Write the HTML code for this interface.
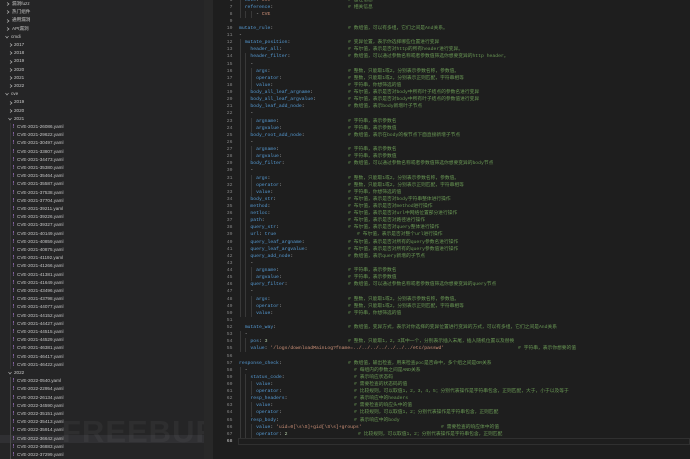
<!DOCTYPE html>
<html><head><meta charset="utf-8">
<style>
*{margin:0;padding:0;box-sizing:border-box}
html,body{width:690px;height:459px;overflow:hidden;background:#1e1e1e}
#side{position:absolute;left:0;top:0;width:213px;height:459px;background:#252526;font-family:"Liberation Sans","Noto Sans CJK SC",sans-serif;font-size:4.6px;color:#c8c8c8;overflow:hidden}
.r{position:absolute;left:0;width:213px;height:8.2px;line-height:8.2px;white-space:nowrap}
.r svg{position:absolute;top:2.2px}
.r .t{position:absolute}
.y{position:absolute;color:#a074c4;font-weight:bold;font-size:5.5px}
.guide{position:absolute;width:1px;background:#363636}
#ed{position:absolute;left:213px;top:0;width:477px;height:459px;background:#1e1e1e;font-family:"Liberation Mono","Noto Sans CJK SC",monospace;font-size:4.75px;overflow:hidden}
.l{position:absolute;left:0;width:477px;height:7.12px;line-height:7.12px;white-space:pre}
.n{position:absolute;left:0;width:19.5px;text-align:right;color:#858585}
.c{position:absolute;left:26px;color:#d4d4d4}
.k{color:#569cd6}
.s{color:#ce9178}
.num{color:#b5cea8}
.g{position:absolute;color:#6a9955}
.ig{position:absolute;width:1px;background:#383838}
#wm{position:absolute;left:62px;top:414px;font-family:"Liberation Sans",sans-serif;font-weight:bold;font-size:31px;color:rgba(255,255,255,0.045);letter-spacing:1px}
</style></head><body>
<div id="side">
<div class="r" style="top:0px"><svg width="4" height="4" viewBox="0 0 4 4" style="left:6px"><path d="M1 0.5L3 2L1 3.5" stroke="#c5c5c5" stroke-width="0.6" fill="none"/></svg><span class="t" style="left:12px">漏洞fuzz</span></div>
<div class="r" style="top:8.2px"><svg width="4" height="4" viewBox="0 0 4 4" style="left:6px"><path d="M1 0.5L3 2L1 3.5" stroke="#c5c5c5" stroke-width="0.6" fill="none"/></svg><span class="t" style="left:12px">热门组件</span></div>
<div class="r" style="top:16.4px"><svg width="4" height="4" viewBox="0 0 4 4" style="left:6px"><path d="M1 0.5L3 2L1 3.5" stroke="#c5c5c5" stroke-width="0.6" fill="none"/></svg><span class="t" style="left:12px">通用漏洞</span></div>
<div class="r" style="top:24.6px"><svg width="4" height="4" viewBox="0 0 4 4" style="left:6px"><path d="M1 0.5L3 2L1 3.5" stroke="#c5c5c5" stroke-width="0.6" fill="none"/></svg><span class="t" style="left:12px">API漏洞</span></div>
<div class="r" style="top:32.8px"><svg width="4" height="4" viewBox="0 0 4 4" style="left:5px"><path d="M0.5 1L2 3L3.5 1" stroke="#c5c5c5" stroke-width="0.6" fill="none"/></svg><span class="t" style="left:11px">cmdi</span></div>
<div class="r" style="top:41px"><svg width="4" height="4" viewBox="0 0 4 4" style="left:9px"><path d="M1 0.5L3 2L1 3.5" stroke="#c5c5c5" stroke-width="0.6" fill="none"/></svg><span class="t" style="left:14px">2017</span></div>
<div class="r" style="top:49.2px"><svg width="4" height="4" viewBox="0 0 4 4" style="left:9px"><path d="M1 0.5L3 2L1 3.5" stroke="#c5c5c5" stroke-width="0.6" fill="none"/></svg><span class="t" style="left:14px">2018</span></div>
<div class="r" style="top:57.4px"><svg width="4" height="4" viewBox="0 0 4 4" style="left:9px"><path d="M1 0.5L3 2L1 3.5" stroke="#c5c5c5" stroke-width="0.6" fill="none"/></svg><span class="t" style="left:14px">2019</span></div>
<div class="r" style="top:65.6px"><svg width="4" height="4" viewBox="0 0 4 4" style="left:9px"><path d="M1 0.5L3 2L1 3.5" stroke="#c5c5c5" stroke-width="0.6" fill="none"/></svg><span class="t" style="left:14px">2020</span></div>
<div class="r" style="top:73.8px"><svg width="4" height="4" viewBox="0 0 4 4" style="left:9px"><path d="M1 0.5L3 2L1 3.5" stroke="#c5c5c5" stroke-width="0.6" fill="none"/></svg><span class="t" style="left:14px">2021</span></div>
<div class="r" style="top:82px"><svg width="4" height="4" viewBox="0 0 4 4" style="left:9px"><path d="M1 0.5L3 2L1 3.5" stroke="#c5c5c5" stroke-width="0.6" fill="none"/></svg><span class="t" style="left:14px">2022</span></div>
<div class="r" style="top:90.2px"><svg width="4" height="4" viewBox="0 0 4 4" style="left:5px"><path d="M0.5 1L2 3L3.5 1" stroke="#c5c5c5" stroke-width="0.6" fill="none"/></svg><span class="t" style="left:11px">cve</span></div>
<div class="r" style="top:98.4px"><svg width="4" height="4" viewBox="0 0 4 4" style="left:9px"><path d="M1 0.5L3 2L1 3.5" stroke="#c5c5c5" stroke-width="0.6" fill="none"/></svg><span class="t" style="left:14px">2019</span></div>
<div class="r" style="top:106.6px"><svg width="4" height="4" viewBox="0 0 4 4" style="left:9px"><path d="M1 0.5L3 2L1 3.5" stroke="#c5c5c5" stroke-width="0.6" fill="none"/></svg><span class="t" style="left:14px">2020</span></div>
<div class="r" style="top:114.8px"><svg width="4" height="4" viewBox="0 0 4 4" style="left:8px"><path d="M0.5 1L2 3L3.5 1" stroke="#c5c5c5" stroke-width="0.6" fill="none"/></svg><span class="t" style="left:14px">2021</span></div>
<div class="r" style="top:434.6px;background:#303033"></div>
<div class="guide" style="left:9.5px;top:123px;height:246px"></div>
<div class="guide" style="left:9.5px;top:377px;height:82px;background:#4a4a4a"></div>
<div id="files"></div>
<div id="wm">FREEBUF</div>
</div>
<div id="ed"></div>
<div style="position:absolute;left:204px;top:0;width:9px;height:459px;background:#282828"></div>
<script>
var files=["CVE-2021-26086","CVE-2021-29622","CVE-2021-30497","CVE-2021-33807","CVE-2021-34473","CVE-2021-35380","CVE-2021-35464","CVE-2021-35587","CVE-2021-37538","CVE-2021-37704","CVE-2021-39211","CVE-2021-39226","CVE-2021-39327","CVE-2021-40149","CVE-2021-40859","CVE-2021-40875","CVE-2021-41192","CVE-2021-41266","CVE-2021-41381","CVE-2021-41649","CVE-2021-43496","CVE-2021-43798","CVE-2021-44077","CVE-2021-44152","CVE-2021-44427","CVE-2021-44515","CVE-2021-44529","CVE-2021-46381","CVE-2021-46417","CVE-2021-46422","FOLDER","CVE-2022-0540","CVE-2022-22954","CVE-2022-26134","CVE-2022-34590","CVE-2022-35151","CVE-2022-35413","CVE-2022-35914","CVE-2022-36642","CVE-2022-36883","CVE-2022-37299"];
var h="";
files.forEach(function(f,i){var top=(15+i)*8.2;
if(f=="FOLDER"){h+='<div class="r" style="top:'+top+'px"><svg width="4" height="4" viewBox="0 0 4 4" style="left:8px"><path d="M0.5 1L2 3L3.5 1" stroke="#c5c5c5" stroke-width="0.6" fill="none"/></svg><span class="t" style="left:14px">2022</span></div>';}
else h+='<div class="r" style="top:'+top+'px"><span class="y" style="left:12.5px">!</span><span class="t" style="left:17px">'+f+'.yaml</span></div>';});
document.getElementById("files").innerHTML=h;

var L=[
[6,1,'<span class="k">note</span>: <span class="s">cve</span>','# 备注信息'],
[7,1,'<span class="k">reference</span>:','# 相关信息'],
[8,3,'- <span class="s">CVE</span>',''],
[9,0,'',''],
[10,0,'<span class="k">mutate_rule</span>:','# 数组值，可以有多组，它们之间是And关系。'],
[11,0,'-',''],
[12,1,'<span class="k">mutate_position</span>:','# 变异位置，表示你选择哪些位置进行变异'],
[13,2,'<span class="k">header_all</span>:','# 布尔值，表示是否对http的所有header进行变异。'],
[14,2,'<span class="k">header_filter</span>:','# 数组值，可以通过参数名称或者参数值筛选你想要变异的http header。'],
[15,2,'-',''],
[16,3,'<span class="k">args</span>:','# 整数，只能取1或2，分别表示参数名称，参数值。'],
[17,3,'<span class="k">operator</span>:','# 整数，只能取1或2，分别表示正则匹配，字符串相等'],
[18,3,'<span class="k">value</span>:','# 字符串，你想筛选的值'],
[19,2,'<span class="k">body_all_leaf_argname</span>:','# 布尔值，表示是否对body中所有叶子结点的参数名进行变异'],
[20,2,'<span class="k">body_all_leaf_argvalue</span>:','# 布尔值，表示是否对body中所有叶子结点的参数值进行变异'],
[21,2,'<span class="k">body_leaf_add_node</span>:','# 数组值，表示body新增叶子节点'],
[22,2,'-',''],
[23,3,'<span class="k">argname</span>:','# 字符串，表示参数名'],
[24,3,'<span class="k">argvalue</span>:','# 字符串，表示参数值'],
[25,2,'<span class="k">body_root_add_node</span>:','# 数组值，表示在body的根节点下面直接新增子节点'],
[26,2,'-',''],
[27,3,'<span class="k">argname</span>:','# 字符串，表示参数名'],
[28,3,'<span class="k">argvalue</span>:','# 字符串，表示参数值'],
[29,2,'<span class="k">body_filter</span>:','# 数组值，可以通过参数名称或者参数值筛选你想要变异的body节点'],
[30,2,'-',''],
[31,3,'<span class="k">args</span>:','# 整数，只能取1或2，分别表示参数名称，参数值。'],
[32,3,'<span class="k">operator</span>:','# 整数，只能取1或2，分别表示正则匹配，字符串相等'],
[33,3,'<span class="k">value</span>:','# 字符串，你想筛选的值'],
[34,2,'<span class="k">body_str</span>:','# 布尔值，表示是否对body字符串整体进行操作'],
[35,2,'<span class="k">method</span>:','# 布尔值，表示是否对method进行操作'],
[36,2,'<span class="k">netloc</span>:','# 布尔值，表示是否对url中网络位置部分进行操作'],
[37,2,'<span class="k">path</span>:','# 布尔值，表示是否对路径进行操作'],
[38,2,'<span class="k">query_str</span>:','# 布尔值，表示是否对query整体进行操作'],
[39,2,'<span class="k">url</span>: <span class="k">true</span>','# 布尔值，表示是否对整个url进行操作',357],
[40,2,'<span class="k">query_leaf_argname</span>:','# 布尔值，表示是否对所有的query参数名进行操作'],
[41,2,'<span class="k">query_leaf_argvalue</span>:','# 布尔值，表示是否对所有的query参数值进行操作'],
[42,2,'<span class="k">query_add_node</span>:','# 数组值，表示query新增的子节点'],
[43,2,'-',''],
[44,3,'<span class="k">argname</span>:','# 字符串，表示参数名'],
[45,3,'<span class="k">argvalue</span>:','# 字符串，表示参数值'],
[46,2,'<span class="k">query_filter</span>:','# 数组值，可以通过参数名称或者参数值筛选你想要变异的query节点'],
[47,2,'-',''],
[48,3,'<span class="k">args</span>:','# 整数，只能取1或2，分别表示参数名称，参数值。'],
[49,3,'<span class="k">operator</span>:','# 整数，只能取1或2，分别表示正则匹配，字符串相等'],
[50,3,'<span class="k">value</span>:','# 字符串，你想筛选的值'],
[51,0,'',''],
[52,1,'<span class="k">mutate_way</span>:','# 数组值，变异方式，表示对你选择的变异位置进行变异的方式，可以有多组，它们之间是And关系'],
[53,1,'-',''],
[54,2,'<span class="k">pos</span>: <span class="num">3</span>','# 整数，只能取1，2，3其中一个，分别表示插入末尾，插入随机位置以及替换'],
[55,2,'<span class="k">value</span>: <span class="s">\'/logs/downloadMainLog?fname=../../../../../../../etc/passwd\'</span>','# 字符串，表示你想要的值',518],
[56,0,'',''],
[57,0,'<span class="k">response_check</span>:','# 数组值，输出检查，用来检查poc是否命中，多个组之间是OR关系'],
[58,1,'-','# 每组内的参数之间是AND关系',354],
[59,2,'<span class="k">status_code</span>:','# 表示响应状态码',354],
[60,3,'<span class="k">value</span>:','# 需要检查的状态码的值',354],
[61,3,'<span class="k">operator</span>:','# 比较规则，可以取值1，2，3，4，5；分别代表操作是字符串包含，正则匹配，大于，小于以及等于',354],
[62,2,'<span class="k">resp_headers</span>:','# 表示响应中的headers',354],
[63,3,'<span class="k">value</span>:','# 需要检查的响应头中的值',354],
[64,3,'<span class="k">operator</span>:','# 比较规则，可以取值1，2；分别代表操作是字符串包含，正则匹配',354],
[65,2,'<span class="k">resp_body</span>:','# 表示响应中的body',354],
[66,3,'<span class="k">value</span>: <span class="s">\'uid=0[\\s\\S]+gid[\\S\\s]+groups\'</span>','# 需要检查的响应体中的值',441],
[67,3,'<span class="k">operator</span>: <span class="num">2</span>','# 比较规则，可以取值1，2；分别代表操作是字符串包含，正则匹配',358],
[68,0,'','']
];
var e="";
function guide(lvl,a,b){var top=-3.5+(a-6)*7.12;var hh=(b-a+1)*7.12;e+='<div class="ig" style="left:'+(26+0.5+lvl*5.7)+'px;top:'+top+'px;height:'+hh+'px"></div>';}
guide(0,6,8);guide(1,8,8);guide(2,8,8);
guide(0,12,50);guide(1,14,50);guide(2,16,18);guide(2,23,24);guide(2,27,28);guide(2,31,33);guide(2,44,45);guide(2,48,50);
guide(0,53,55);guide(1,54,55);
guide(0,58,67);guide(1,59,67);guide(2,60,61);guide(2,63,64);guide(2,66,67);
e+='<div style="position:absolute;left:25px;top:'+(-3.5+62*7.12)+'px;width:452px;height:7.12px;border:0.6px solid #303030"></div>';
L.forEach(function(x){var top=-3.5+(x[0]-6)*7.12;
var nc=x[0]==68?'color:#c6c6c6':'';
e+='<div class="l" style="top:'+top+'px"><span class="n" style="'+nc+'">'+x[0]+'</span><span class="c" style="left:'+(26+x[1]*5.7)+'px">'+x[2]+'</span>';
if(x[3])e+='<span class="g" style="left:'+((x[4]||348)-213)+'px">'+x[3]+'</span>';
e+='</div>';});
document.getElementById("ed").innerHTML=e;
</script>
</body></html>
